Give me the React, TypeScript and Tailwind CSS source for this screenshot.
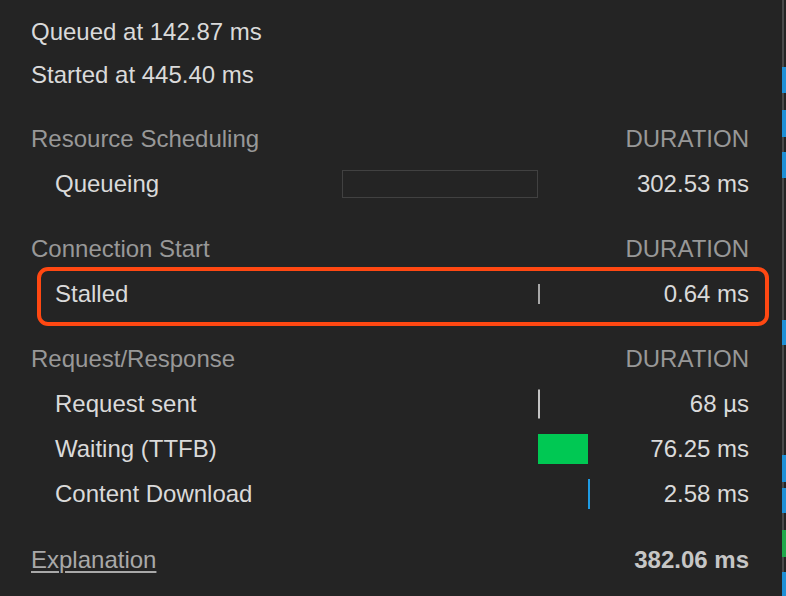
import React from "react";

interface TimingRow {
  label: string;
  value: string;
  bar: { left: number; width: number; kind: "outline" | "tick" | "fill" | "line"; height: number; color?: string };
  highlight?: boolean;
}

interface Section {
  title: string;
  rows: TimingRow[];
}

const sections: Section[] = [
  {
    title: "Resource Scheduling",
    rows: [
      { label: "Queueing", value: "302.53 ms", bar: { left: 0, width: 196, kind: "outline", height: 28 } },
    ],
  },
  {
    title: "Connection Start",
    rows: [
      {
        label: "Stalled",
        value: "0.64 ms",
        bar: { left: 196, width: 2, kind: "tick", height: 20, color: "#a8a8a8" },
        highlight: true,
      },
    ],
  },
  {
    title: "Request/Response",
    rows: [
      { label: "Request sent", value: "68 µs", bar: { left: 196, width: 2, kind: "tick", height: 29, color: "#c4c4c4" } },
      { label: "Waiting (TTFB)", value: "76.25 ms", bar: { left: 196, width: 50, kind: "fill", height: 30, color: "#00c853" } },
      { label: "Content Download", value: "2.58 ms", bar: { left: 246, width: 2, kind: "line", height: 30, color: "#1e9be3" } },
    ],
  },
];

// waterfall strip on the far right edge
const strip: { top: number; height: number; color: string }[] = [
  { top: 67, height: 26, color: "#1e8fd6" },
  { top: 110, height: 27, color: "#1e8fd6" },
  { top: 152, height: 26, color: "#1e8fd6" },
  { top: 320, height: 25, color: "#1e8fd6" },
  { top: 455, height: 27, color: "#1e8fd6" },
  { top: 488, height: 25, color: "#1e8fd6" },
  { top: 530, height: 27, color: "#1fa84a" },
  { top: 572, height: 24, color: "#1e8fd6" },
];

function Bar({ bar }: { bar: TimingRow["bar"] }) {
  if (bar.kind === "outline") {
    return (
      <div
        className="absolute top-1/2 -translate-y-1/2 border border-[#414141]"
        style={{ left: bar.left, width: bar.width, height: bar.height }}
      />
    );
  }
  return (
    <div
      className="absolute top-1/2 -translate-y-1/2"
      style={{ left: bar.left, width: bar.width, height: bar.height, background: bar.color }}
    />
  );
}

export default function App() {
  return (
    <div
      className="flex w-[786px] h-[596px] overflow-hidden bg-[#242424]"
      style={{ fontFamily: '"Liberation Sans", Arial, sans-serif' }}
    >
      <div className="w-[782px] shrink-0 pl-[31px] pr-[33px] pt-[10px] text-[24px] text-[#dadada]">
        <div className="h-[43px] flex items-center">Queued at 142.87 ms</div>
        <div className="h-[43px] flex items-center">Started at 445.40 ms</div>

        {sections.map((section) => (
          <div key={section.title} className="mt-[21px]">
            <div className="h-[44px] flex items-center justify-between text-[#989898]">
              <span>{section.title}</span>
              <span>DURATION</span>
            </div>
            {section.rows.map((row) => (
              <div key={row.label} className="relative h-[45px] flex items-center pl-[24px]">
                {row.highlight && (
                  <div className="absolute left-[6px] -right-[20px] -top-[4px] -bottom-[10px] border-[4px] border-[#ff4812] rounded-[11px]" />
                )}
                <span className="w-[287px] shrink-0">{row.label}</span>
                <div className="relative h-full w-[260px] shrink-0">
                  <Bar bar={row.bar} />
                </div>
                <span className="ml-auto">{row.value}</span>
              </div>
            ))}
          </div>
        ))}

        <div className="mt-[22px] h-[44px] flex items-center justify-between">
          <a className="text-[#a9a9a9] underline underline-offset-[3px] decoration-[2px]">Explanation</a>
          <span className="font-bold text-[#c6c6c6]">382.06 ms</span>
        </div>
      </div>

      <div className="relative w-[4px] h-full shrink-0">
        <div className="absolute left-0 top-0 bottom-0 w-[2px] bg-[#4a4a4a]" />
        {strip.map((s, i) => (
          <div
            key={i}
            className="absolute left-0 w-[4px]"
            style={{ top: s.top, height: s.height, background: s.color }}
          />
        ))}
      </div>
    </div>
  );
}
